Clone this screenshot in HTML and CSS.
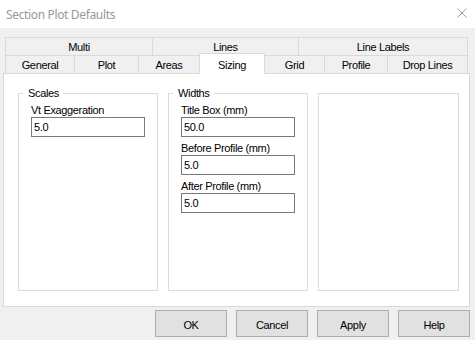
FILE: index.html
```html
<!DOCTYPE html>
<html lang="en">
<head>
    <meta charset="UTF-8">
    <meta name="viewport" content="width=device-width, initial-scale=1.0">
    <title>Section Plot Defaults</title>
    <link rel="stylesheet" href="styles.css">
</head>
<body>
    <div class="titlebar">
        <span class="title">Section Plot Defaults</span>
        <svg class="close" width="10" height="10" viewBox="0 0 10 10">
            <path d="M0.5 0.5 L9.5 9.5 M9.5 0.5 L0.5 9.5" stroke="#9a9a9a" stroke-width="1" fill="none"/>
        </svg>
    </div>

    <div class="tabs">
        <div class="tab-row top-row">
            <div class="tab" style="width: 148px;">Multi</div>
            <div class="tab" style="width: 147px;">Lines</div>
            <div class="tab" style="width: 170px;">Line Labels</div>
        </div>
        <div class="tab-row bottom-row">
            <div class="tab" style="width: 70px;">General</div>
            <div class="tab" style="width: 65px;">Plot</div>
            <div class="tab" style="width: 62px;">Areas</div>
            <div class="tab active" style="width: 66px;">Sizing</div>
            <div class="tab" style="width: 61px;">Grid</div>
            <div class="tab" style="width: 64px;">Profile</div>
            <div class="tab" style="width: 81px;">Drop Lines</div>
        </div>
    </div>

    <div class="panel">
        <fieldset class="group">
            <legend>Scales</legend>
            <div class="field">
                <label for="vt">Vt Exaggeration</label>
                <input type="text" id="vt" value="5.0">
            </div>
        </fieldset>
        <fieldset class="group">
            <legend>Widths</legend>
            <div class="field">
                <label for="title-box">Title Box (mm)</label>
                <input type="text" id="title-box" value="50.0">
            </div>
            <div class="field">
                <label for="before">Before Profile (mm)</label>
                <input type="text" id="before" value="5.0">
            </div>
            <div class="field">
                <label for="after">After Profile (mm)</label>
                <input type="text" id="after" value="5.0">
            </div>
        </fieldset>
        <div class="blank-box"></div>
    </div>

    <div class="buttons">
        <button class="button">OK</button>
        <button class="button">Cancel</button>
        <button class="button">Apply</button>
        <button class="button">Help</button>
    </div>
</body>
</html>
```

FILE: styles.css
```css
/* Диалог */
body {
    margin: 0;
    width: 475px;
    height: 340px;
    overflow: hidden;
    background-color: #f0f0f0;
    color: #000;
    font-family: "Liberation Sans", Arial, sans-serif;
    font-size: 11px;
    letter-spacing: -0.35px;
}
.titlebar {
    height: 28px;
    background-color: #fff;
    display: flex;
    align-items: center;
    justify-content: space-between;
    padding: 0 8px 0 6px;
    box-sizing: border-box;
}
.title {
    font-family: "Noto Sans", sans-serif;
    font-size: 12px;
    color: #999;
}
.close {
    display: block;
    margin-top: -2px;
}

/* Вкладки */
.tabs {
    margin: 9px 0 0 5px;
}
.tab-row {
    display: flex;
}
.tab {
    box-sizing: border-box;
    flex: none;
    text-align: center;
    border: 1px solid #d9d9d9;
    margin-left: -1px;
    background-color: #f0f0f0;
}
.tab:first-child {
    margin-left: 0;
}
.top-row .tab {
    height: 19px;
    line-height: 16px;
    padding-top: 1px;
}
.bottom-row {
    height: 18px;
    margin-top: -1px;
}
.bottom-row .tab {
    height: 18px;
    border-bottom: none;
    line-height: 16px;
    padding-top: 1px;
}
.bottom-row .tab.active {
    height: 21px;
    margin-top: -2px;
    margin-bottom: -1px;
    padding-top: 3px;
    background-color: #fff;
    position: relative;
    z-index: 1;
}

/* Панель */
.panel {
    box-sizing: border-box;
    margin-left: 3px;
    width: 467px;
    height: 234px;
    background-color: #fff;
    border: 1px solid #d9d9d9;
    padding: 13px 0 15px 14px;
    display: flex;
    gap: 10px;
}
.group {
    box-sizing: border-box;
    width: 140px;
    margin: 0;
    padding: 0 12px;
    border: 1px solid #dcdcdc;
    min-width: 0;
}
.group legend {
    margin-left: -8px;
    padding: 0 4px 0 5px;
    line-height: 13px;
}
.blank-box {
    box-sizing: border-box;
    width: 141px;
    margin-top: 6px;
    border: 1px solid #dcdcdc;
}
.field {
    margin-top: 5px;
}
.field:first-of-type {
    margin-top: 4px;
}
.field label {
    display: block;
    line-height: 13px;
}
.field input {
    display: block;
    box-sizing: border-box;
    width: 114px;
    height: 20px;
    margin: 0;
    padding: 0 2px;
    border: 1px solid #7a7a7a;
    font-family: inherit;
    font-size: 11px;
    letter-spacing: -0.35px;
    color: #000;
    outline: none;
}

/* Кнопки */
.buttons {
    display: flex;
    gap: 9px;
    margin: 3px 0 0 155px;
}
.button {
    box-sizing: border-box;
    width: 72px;
    height: 27px;
    padding: 2px 0 0 0;
    background-color: #e1e1e1;
    border: 1px solid #adadad;
    font-family: inherit;
    font-size: 11px;
    letter-spacing: -0.35px;
    color: #000;
}
```
